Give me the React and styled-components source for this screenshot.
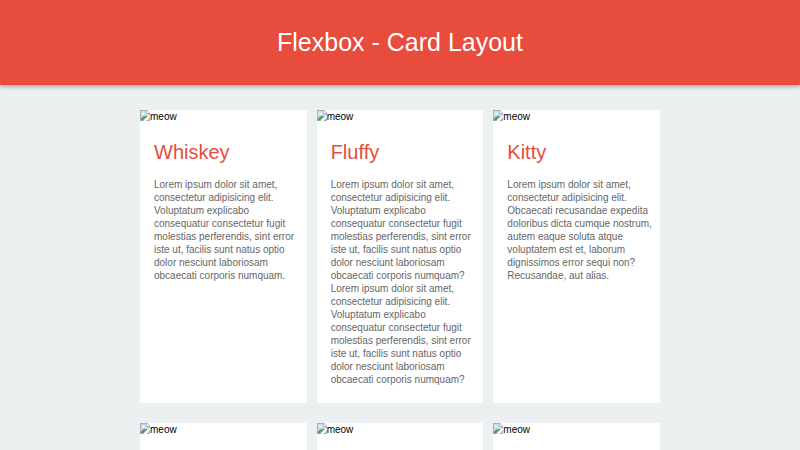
import styled, { createGlobalStyle } from "styled-components";

const lorem =
  "Lorem ipsum dolor sit amet, consectetur adipisicing elit. Voluptatum explicabo consequatur consectetur fugit molestias perferendis, sint error iste ut, facilis sunt natus optio dolor nesciunt laboriosam obcaecati corporis numquam";

const kittyText =
  "Lorem ipsum dolor sit amet, consectetur adipisicing elit. Obcaecati recusandae expedita doloribus dicta cumque nostrum, autem eaque soluta atque voluptatem est et, laborum dignissimos error sequi non? Recusandae, aut alias.";

const cats = [
  { id: 1, name: "Whiskey", text: `${lorem}.` },
  { id: 2, name: "Fluffy", text: `${lorem}? ${lorem}?` },
  { id: 3, name: "Kitty", text: kittyText },
  { id: 4, name: "Whiskey", text: `${lorem}.` },
  { id: 5, name: "Fluffy", text: `${lorem}? ${lorem}?` },
  { id: 6, name: "Kitty", text: kittyText },
];

export default function App() {
  return (
    <>
      <GlobalStyle />
      <Header>
        <Title>Flexbox - Card Layout</Title>
      </Header>
      <Cards>
        {cats.map((cat) => (
          <Card key={cat.id}>
            <Picture>
              <MissingImageIcon />
              meow
            </Picture>
            <CardContent>
              <CardTitle>{cat.name}</CardTitle>
              <CardText>{cat.text}</CardText>
            </CardContent>
          </Card>
        ))}
      </Cards>
    </>
  );
}

function MissingImageIcon() {
  return (
    <svg width="10" height="11" viewBox="0 0 10 11" aria-hidden="true">
      <path d="M0 0h7l3 3v8H0z" fill="#a3a3a3" />
      <path d="M.7.7H6.5v3h2.8v6.6H.7z" fill="#c8d9f3" />
      <path d="M7 .8L9.2 3H7z" fill="#fff" />
      <path d="M1.8 4.2c0-2 3-2 3 0z" fill="#fff" />
      <path d="M.7 10.3v-1C2 6.5 5 5.5 7.2 6.3l-4 4z" fill="#4fa545" />
      <path d="M3.5 11L10 4.8V7l-4 4z" fill="#fff" />
    </svg>
  );
}

const GlobalStyle = createGlobalStyle`
  * {
    box-sizing: border-box;
  }

  body {
    margin: 0;
    background: #ecf0f1;
    font-family: "Liberation Sans", Arial, sans-serif;
    font-size: 10px;
  }
`;

const Header = styled.header`
  padding: 28px 20px;
  background: #e74c3c;
  box-shadow: 0 1px 5px rgba(0, 0, 0, 0.4);
  text-align: center;
`;

const Title = styled.h1`
  margin: 0;
  color: #fff;
  font-size: 25px;
  font-weight: 400;
  line-height: 29px;
`;

const Cards = styled.main`
  display: grid;
  grid-template-columns: repeat(3, 1fr);
  gap: 20px 10px;
  width: 65%;
  margin: 0 auto;
  padding: 25px 0;
`;

const Card = styled.article`
  background: #fff;
`;

const Picture = styled.div`
  display: flex;
  color: #000;
  line-height: 13px;
`;

const CardContent = styled.div`
  padding: 17px 7px 17px 14px;
`;

const CardTitle = styled.h2`
  margin: 0 0 14px;
  color: #e74c3c;
  font-size: 20px;
  font-weight: 400;
  line-height: 24px;
`;

const CardText = styled.p`
  margin: 0;
  color: #666;
  font-size: 10px;
  line-height: 13px;
`;
